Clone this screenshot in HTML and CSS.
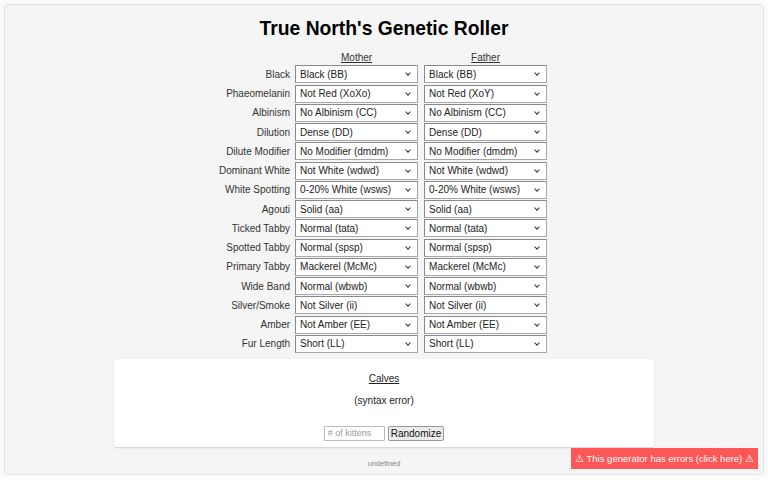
FILE: index.html
```html
<!DOCTYPE html>
<html>
<head>
<meta charset="utf-8">
<link rel="stylesheet" href="styles.css">
</head>
<body>
<div class="page">
  <h1 class="title">True North's Genetic Roller</h1>
  <div class="genes">
    <div class="head-blank"></div>
    <div class="head">Mother</div>
    <div class="head">Father</div>

    <label class="lbl">Black</label>
    <span class="pick"><select class="sel"><option>Black (BB)</option></select></span>
    <span class="pick"><select class="sel"><option>Black (BB)</option></select></span>

    <label class="lbl">Phaeomelanin</label>
    <span class="pick"><select class="sel"><option>Not Red (XoXo)</option></select></span>
    <span class="pick"><select class="sel"><option>Not Red (XoY)</option></select></span>

    <label class="lbl">Albinism</label>
    <span class="pick"><select class="sel"><option>No Albinism (CC)</option></select></span>
    <span class="pick"><select class="sel"><option>No Albinism (CC)</option></select></span>

    <label class="lbl">Dilution</label>
    <span class="pick"><select class="sel"><option>Dense (DD)</option></select></span>
    <span class="pick"><select class="sel"><option>Dense (DD)</option></select></span>

    <label class="lbl">Dilute Modifier</label>
    <span class="pick"><select class="sel"><option>No Modifier (dmdm)</option></select></span>
    <span class="pick"><select class="sel"><option>No Modifier (dmdm)</option></select></span>

    <label class="lbl">Dominant White</label>
    <span class="pick"><select class="sel"><option>Not White (wdwd)</option></select></span>
    <span class="pick"><select class="sel"><option>Not White (wdwd)</option></select></span>

    <label class="lbl">White Spotting</label>
    <span class="pick"><select class="sel"><option>0-20% White (wsws)</option></select></span>
    <span class="pick"><select class="sel"><option>0-20% White (wsws)</option></select></span>

    <label class="lbl">Agouti</label>
    <span class="pick"><select class="sel"><option>Solid (aa)</option></select></span>
    <span class="pick"><select class="sel"><option>Solid (aa)</option></select></span>

    <label class="lbl">Ticked Tabby</label>
    <span class="pick"><select class="sel"><option>Normal (tata)</option></select></span>
    <span class="pick"><select class="sel"><option>Normal (tata)</option></select></span>

    <label class="lbl">Spotted Tabby</label>
    <span class="pick"><select class="sel"><option>Normal (spsp)</option></select></span>
    <span class="pick"><select class="sel"><option>Normal (spsp)</option></select></span>

    <label class="lbl">Primary Tabby</label>
    <span class="pick"><select class="sel"><option>Mackerel (McMc)</option></select></span>
    <span class="pick"><select class="sel"><option>Mackerel (McMc)</option></select></span>

    <label class="lbl">Wide Band</label>
    <span class="pick"><select class="sel"><option>Normal (wbwb)</option></select></span>
    <span class="pick"><select class="sel"><option>Normal (wbwb)</option></select></span>

    <label class="lbl">Silver/Smoke</label>
    <span class="pick"><select class="sel"><option>Not Silver (ii)</option></select></span>
    <span class="pick"><select class="sel"><option>Not Silver (ii)</option></select></span>

    <label class="lbl">Amber</label>
    <span class="pick"><select class="sel"><option>Not Amber (EE)</option></select></span>
    <span class="pick"><select class="sel"><option>Not Amber (EE)</option></select></span>

    <label class="lbl">Fur Length</label>
    <span class="pick"><select class="sel"><option>Short (LL)</option></select></span>
    <span class="pick"><select class="sel"><option>Short (LL)</option></select></span>
  </div>

  <div class="calves">
    <div class="calves-title">Calves</div>
    <div class="calves-out">(syntax error)</div>
    <div class="calves-ctrl">
      <input class="num" type="text" placeholder="# of kittens">
      <button class="btn">Randomize</button>
    </div>
  </div>

  <div class="foot">undefined</div>
</div>
<div class="errors">⚠ This generator has errors (click here) ⚠</div>
</body>
</html>
```

FILE: styles.css
```css
html, body {
  margin: 0;
  padding: 0;
  background: #fbfbfb;
  font-family: "Liberation Sans", Arial, sans-serif;
  color: #111;
}

.page {
  box-sizing: border-box;
  margin: 4px 4px 0 4px;
  height: 471px;
  border: 1px solid #e2e2e2;
  border-radius: 4px;
  background: #f5f5f5;
  padding-top: 13px;
  display: flex;
  flex-direction: column;
  align-items: center;
}

.title {
  margin: 0;
  font-size: 19.3px;
  line-height: 22px;
  font-weight: bold;
  color: #000;
}

.genes {
  margin-top: 12px;
  margin-right: 2px;
  display: grid;
  grid-template-columns: auto 123px 123px;
  column-gap: 6px;
  row-gap: 1.25px;
  align-items: center;
  font-size: 10px;
}

.head {
  text-align: center;
  text-decoration: underline;
  line-height: 12px;
  color: #333;
}

.lbl {
  text-align: right;
  color: #333;
  margin-right: -1px;
}

.pick {
  position: relative;
  display: block;
  height: 18px;
}

.pick::after {
  content: "";
  position: absolute;
  right: 8px;
  top: 6px;
  width: 3px;
  height: 3px;
  border-right: 1.3px solid #333;
  border-bottom: 1.3px solid #333;
  transform: rotate(45deg);
  pointer-events: none;
}

.sel {
  display: block;
  box-sizing: border-box;
  width: 123px;
  height: 18px;
  margin: 0;
  -webkit-appearance: none;
  appearance: none;
  font-family: "Liberation Sans", Arial, sans-serif;
  font-size: 10px;
  color: #222;
  background-color: #fff;
  border: 1px solid #a8a8a8;
  border-top-color: #8a8a8a;
  border-left-color: #8a8a8a;
  border-radius: 0;
  padding: 0 14px 0 4px;
}

.calves {
  box-sizing: border-box;
  margin-top: 6px;
  width: 540px;
  height: 88px;
  background: #fff;
  border-radius: 2px;
  box-shadow: 0 1px 2px rgba(0,0,0,0.15);
  display: flex;
  flex-direction: column;
  align-items: center;
  font-size: 10px;
  padding-top: 14px;
}

.calves-title {
  text-decoration: underline;
  line-height: 12px;
  color: #222;
}

.calves-out {
  margin-top: 10px;
  line-height: 12px;
  color: #222;
}

.calves-ctrl {
  margin-top: 19px;
  display: flex;
  align-items: center;
  gap: 3px;
}

.num {
  box-sizing: border-box;
  width: 61px;
  height: 15px;
  font-family: "Liberation Sans", Arial, sans-serif;
  font-size: 9px;
  padding: 0 3px;
  border: 1px solid #bbb;
  border-radius: 1px;
  margin: 0;
}

.num::placeholder {
  color: #999;
}

.btn {
  box-sizing: border-box;
  height: 15px;
  font-family: "Liberation Sans", Arial, sans-serif;
  font-size: 10px;
  padding: 0 2px;
  border: 1px solid #999;
  border-radius: 2px;
  background: #ececec;
  color: #111;
  margin: 0;
}

.foot {
  margin-top: 12px;
  font-size: 7.5px;
  color: #888;
}

.errors {
  position: fixed;
  right: 10px;
  bottom: 11px;
  width: 187px;
  height: 21px;
  box-sizing: border-box;
  background: #ff5656;
  color: #fff;
  font-size: 9.5px;
  line-height: 21px;
  text-align: center;
  white-space: nowrap;
}
```
